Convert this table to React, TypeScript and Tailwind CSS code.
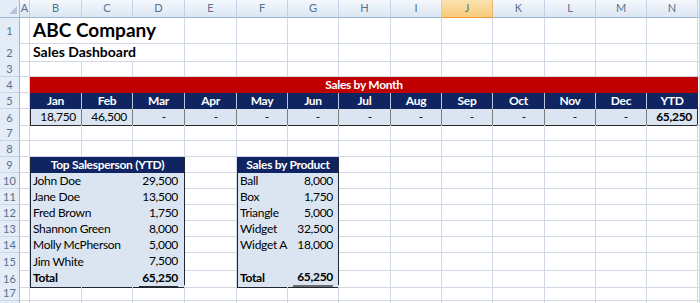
import React from "react";

const COLS =
  "grid grid-cols-[20px_10px_52px_51px_52px_52px_51px_51px_52px_51px_51px_52px_51px_51px_51px_1fr]";
const GRID = "border-r border-b border-[#d0d7e5]";
const LETTERS = ["A", "B", "C", "D", "E", "F", "G", "H", "I", "J", "K", "L", "M", "N", ""];
const MONTHS = ["Jan", "Feb", "Mar", "Apr", "May", "Jun", "Jul", "Aug", "Sep", "Oct", "Nov", "Dec", "YTD"];
const MONTH_VALUES = ["18,750", "46,500", "-", "-", "-", "-", "-", "-", "-", "-", "-", "-", "65,250"];

const SALESPEOPLE = [
  ["John Doe", "29,500"],
  ["Jane Doe", "13,500"],
  ["Fred Brown", "1,750"],
  ["Shannon Green", "8,000"],
  ["Molly McPherson", "5,000"],
  ["Jim White", "7,500"],
  ["Total", "65,250"],
];

const PRODUCTS = [
  ["Ball", "8,000"],
  ["Box", "1,750"],
  ["Triangle", "5,000"],
  ["Widget", "32,500"],
  ["Widget A", "18,000"],
  ["", ""],
  ["Total", "65,250"],
];

function RowHead({ n }: { n?: number }) {
  return (
    <div className="flex items-center justify-center border-r border-b border-r-[#9eb6ce] border-b-[#c9d7ea] bg-[#e4ecf7] text-[11px] leading-none tracking-normal text-[#56708f]">
      {n}
    </div>
  );
}

function Blanks({ count }: { count: number }) {
  return (
    <>
      {Array.from({ length: count }).map((_, i) => (
        <div key={i} className={GRID} />
      ))}
    </>
  );
}

function HeaderRow() {
  return (
    <div className={`${COLS} h-[18px]`}>
      <div className="relative border-r border-b border-[#9eb6ce] bg-[#e4ecf7]">
        <svg className="absolute right-[2px] bottom-[3px]" width="8" height="8" viewBox="0 0 8 8">
          <polygon points="8,0 8,8 0,8" fill="#b4c4d8" />
        </svg>
      </div>
      {LETTERS.map((l) =>
        l === "J" ? (
          <div
            key={l}
            className="flex items-center justify-center border-r border-b border-r-[#e8b870] border-b-[#f29536] bg-linear-to-b from-[#fbe2b0] to-[#f7cb7a] text-[11px] tracking-normal text-[#56708f]"
          >
            {l}
          </div>
        ) : (
          <div
            key={l || "o"}
            className="flex items-center justify-center border-r border-b border-r-[#c3d2e4] border-b-[#9eb6ce] bg-linear-to-b from-[#f4f8fc] to-[#dbe6f3] text-[11px] tracking-normal text-[#56708f]"
          >
            {l}
          </div>
        )
      )}
    </div>
  );
}

function BlankRow({ n }: { n?: number }) {
  return (
    <div className={`${COLS} h-4`}>
      <RowHead n={n} />
      <Blanks count={15} />
    </div>
  );
}

function TableRow({ n, idx }: { n: number; idx: number }) {
  const [name, value] = SALESPEOPLE[idx];
  const [prod, pval] = PRODUCTS[idx];
  const last = idx === SALESPEOPLE.length - 1;
  const bottom = last ? "border-b border-b-[#1f2633]" : "";
  const weight = last ? "font-bold" : "";
  return (
    <div className={`${COLS} h-4`}>
      <RowHead n={n} />
      <Blanks count={1} />
      <div className={`col-span-2 flex items-center whitespace-nowrap border-l border-l-[#1f2633] bg-[#dbe5f1] pl-[2px] leading-4 ${bottom} ${weight}`}>
        {name}
      </div>
      <div className={`flex items-center border-r border-r-[#1f2633] bg-[#dbe5f1] ${bottom}`}>
        <div
          className={`mx-[6px] flex h-full w-full items-center justify-end leading-4 ${weight} ${
            idx === 5 ? "border-b-2 border-double border-b-[#6b6b6b]" : ""
          } ${last ? "border-b border-b-[#2b2b2b]" : ""}`}
        >
          {value}
        </div>
      </div>
      <Blanks count={1} />
      <div className={`flex items-center whitespace-nowrap border-l border-l-[#1f2633] bg-[#dbe5f1] pl-[2px] leading-4 ${bottom} ${weight}`}>
        {prod}
      </div>
      <div className={`flex items-center border-r border-r-[#1f2633] bg-[#dbe5f1] ${bottom}`}>
        <div
          className={`ml-[5px] mr-[5px] flex h-full w-full items-center justify-end leading-4 ${weight} ${
            idx === 5 ? "border-b border-b-[#2b2b2b]" : ""
          } ${last ? "border-b-2 border-double border-b-[#6b6b6b]" : ""}`}
        >
          {pval}
        </div>
      </div>
      <Blanks count={8} />
    </div>
  );
}

export default function App() {
  return (
    <div className="h-[303px] w-[700px] overflow-hidden bg-white font-[family-name:Lato,sans-serif] text-[12px] tracking-[-0.3px] text-black">
      <HeaderRow />

      <div className={`${COLS} h-[25px]`}>
        <RowHead n={1} />
        <Blanks count={1} />
        <div className={`col-span-3 flex items-end pb-[1px] pl-[3px] text-[19px] font-bold leading-6 tracking-normal ${GRID}`}>
          ABC Company
        </div>
        <Blanks count={11} />
      </div>

      <div className={`${COLS} h-[18px]`}>
        <RowHead n={2} />
        <Blanks count={1} />
        <div className={`col-span-3 flex items-end pl-[3px] text-[14px] font-bold leading-[18px] tracking-normal ${GRID}`}>
          Sales Dashboard
        </div>
        <Blanks count={11} />
      </div>

      <BlankRow n={3} />

      <div className={`${COLS} h-4`}>
        <RowHead n={4} />
        <Blanks count={1} />
        <div className="col-span-13 flex items-center justify-center bg-[#c00000] font-bold leading-4 text-white">
          Sales by Month
        </div>
        <Blanks count={1} />
      </div>

      <div className={`${COLS} h-4`}>
        <RowHead n={5} />
        <Blanks count={1} />
        {MONTHS.map((m, i) => (
          <div
            key={m}
            className={`flex items-center justify-center bg-[#0f2461] font-bold leading-4 text-white ${
              i < MONTHS.length - 1 ? "border-r border-r-[#b9c5da]" : "border-r border-r-[#1f2633]"
            }`}
          >
            {m}
          </div>
        ))}
        <Blanks count={1} />
      </div>

      <div className={`${COLS} h-4`}>
        <RowHead n={6} />
        <Blanks count={1} />
        {MONTH_VALUES.map((v, i) => (
          <div
            key={i}
            className={`flex items-center justify-end border-b border-b-[#2a2a2a] bg-[#dbe5f1] leading-4 ${
              i === 0 ? "border-l border-l-[#2a2a2a]" : ""
            } ${i === MONTH_VALUES.length - 1 ? "border-r border-r-[#2a2a2a] font-bold" : "border-r border-r-[#7d7d7d]"} ${
              v === "-" ? "pr-[18px]" : "pr-[5px]"
            }`}
          >
            {v}
          </div>
        ))}
        <Blanks count={1} />
      </div>

      <BlankRow n={7} />
      <BlankRow n={8} />

      <div className={`${COLS} h-4`}>
        <RowHead n={9} />
        <Blanks count={1} />
        <div className="col-span-3 flex items-center justify-center border-x border-[#1f2633] bg-[#0f2461] font-bold leading-4 text-white">
          Top Salesperson (YTD)
        </div>
        <Blanks count={1} />
        <div className="col-span-2 flex items-center justify-center border-x border-[#1f2633] bg-[#0f2461] font-bold leading-4 text-white">
          Sales by Product
        </div>
        <Blanks count={8} />
      </div>

      {SALESPEOPLE.map((_, i) => (
        <TableRow key={i} n={10 + i} idx={i} />
      ))}

      <BlankRow n={17} />
      <BlankRow />
    </div>
  );
}
